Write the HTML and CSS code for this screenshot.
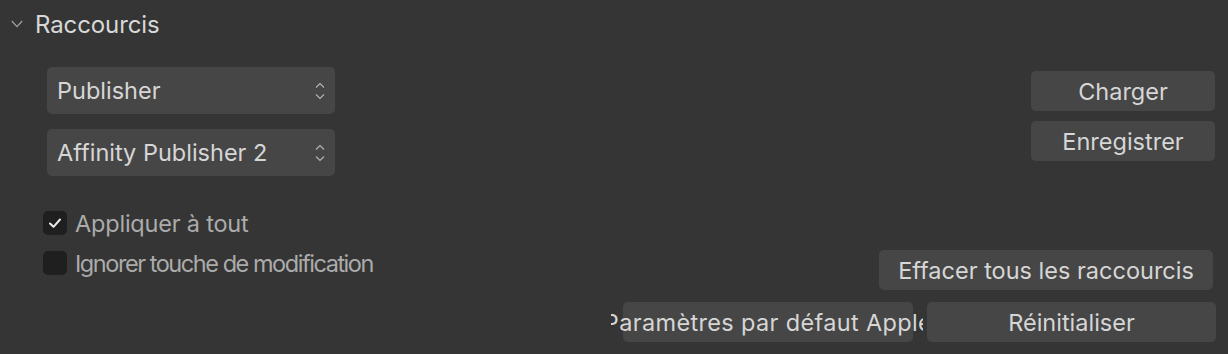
FILE: index.html
```html
<!DOCTYPE html>
<html lang="fr">
<head>
<meta charset="utf-8">
<title>Raccourcis</title>
<link rel="stylesheet" href="styles.css">
</head>
<body>
<div class="panel">
  <div class="header">
    <svg class="disclosure" width="12" height="8" viewBox="0 0 12 8"><path d="M0.8 1 L6 6.6 L11.2 1" fill="none" stroke="#a3a3a3" stroke-width="1.2"/></svg>
    <span class="title">Raccourcis</span>
  </div>
  <div class="main">
    <div class="left">
      <div class="popups">
        <div class="popup">
          <span class="popup-label">Publisher</span>
          <svg class="updown" width="10" height="18" viewBox="0 0 10 18"><path d="M1 5.5 L5 1.5 L9 5.5 M1 12.5 L5 16.5 L9 12.5" fill="none" stroke="#b5b5b5" stroke-width="1.1"/></svg>
        </div>
        <div class="popup">
          <span class="popup-label">Affinity Publisher 2</span>
          <svg class="updown" width="10" height="18" viewBox="0 0 10 18"><path d="M1 5.5 L5 1.5 L9 5.5 M1 12.5 L5 16.5 L9 12.5" fill="none" stroke="#b5b5b5" stroke-width="1.1"/></svg>
        </div>
      </div>
      <div class="checks">
        <label class="check">
          <span class="box"><svg width="14" height="12" viewBox="0 0 14 12"><path d="M2 6.5 L5.5 9.8 L12 2.5" fill="none" stroke="#ececec" stroke-width="2" stroke-linecap="round" stroke-linejoin="round"/></svg></span>
          <span class="check-label">Appliquer à tout</span>
        </label>
        <label class="check">
          <span class="box"></span>
          <span class="check-label check-label-tight">Ignorer touche de modification</span>
        </label>
      </div>
    </div>
    <div class="right">
      <div class="file-buttons">
        <div class="btn btn-file">Charger</div>
        <div class="btn btn-file">Enregistrer</div>
      </div>
      <div class="btn btn-clear">Effacer tous les raccourcis</div>
      <div class="bottom-row">
        <div class="btn btn-wide btn-overflow"><span>Paramètres par défaut Apple</span></div>
        <div class="btn btn-wide">Réinitialiser</div>
      </div>
    </div>
  </div>
</div>
</body>
</html>
```
FILE: styles.css
```css
html, body {
  margin: 0;
  padding: 0;
  background: #353535;
}

body {
  width: 1228px;
  height: 354px;
  overflow: hidden;
  font-family: "Inter", "Noto Sans", sans-serif;
  color: #d6d6d6;
  font-size: 23.5px;
}

.panel {
  padding-right: 12px;
}

.header {
  display: flex;
  align-items: center;
  height: 48px;
  padding-left: 11px;
  gap: 12px;
}

.disclosure {
  display: block;
  margin-top: -1px;
}

.title {
  font-size: 24px;
  color: #d8d8d8;
  letter-spacing: -0.1px;
}

.main {
  display: flex;
  justify-content: space-between;
}

.left {
  padding-left: 47px;
  padding-top: 19px;
}

.popups {
  display: flex;
  flex-direction: column;
  gap: 15px;
}

.popup {
  width: 288px;
  height: 47px;
  box-sizing: border-box;
  background: #464646;
  border-radius: 5px;
  display: flex;
  align-items: center;
  justify-content: space-between;
  padding: 0 10px 0 10px;
}

.popup-label {
  color: #d6d6d6;
  letter-spacing: 0;
}

.updown {
  display: block;
}

.checks {
  display: flex;
  flex-direction: column;
  gap: 16px;
  margin-top: 35px;
  margin-left: -4px;
}

.check {
  display: flex;
  align-items: center;
  gap: 8px;
  height: 24px;
}

.box {
  width: 24px;
  height: 24px;
  box-sizing: border-box;
  border-radius: 5px;
  background: #1f1f1f;
  display: flex;
  align-items: center;
  justify-content: center;
}

.box svg {
  display: block;
}

.check-label {
  color: #ababab;
  letter-spacing: -0.2px;
}

.check-label-tight {
  letter-spacing: -1.45px;
}

.right {
  display: flex;
  flex-direction: column;
  align-items: flex-end;
  padding-top: 23px;
}

.btn {
  background: #464646;
  border-radius: 5px;
  height: 40px;
  display: flex;
  align-items: center;
  justify-content: center;
  color: #d6d6d6;
  white-space: nowrap;
  box-sizing: border-box;
}

.file-buttons {
  display: flex;
  flex-direction: column;
  gap: 10px;
  margin-right: 1px;
}

.btn-file {
  width: 184px;
}

.btn-clear {
  width: 334px;
  margin-top: 89px;
  margin-right: 3px;
}

.bottom-row {
  display: flex;
  gap: 14px;
  margin-top: 12px;
}

.btn-wide {
  width: 289px;
}

.btn-overflow {
  width: 290px;
  clip-path: inset(0 -10px 0 -12px);
}

.btn-overflow span {
  flex: none;
  letter-spacing: 0.35px;
}
```
